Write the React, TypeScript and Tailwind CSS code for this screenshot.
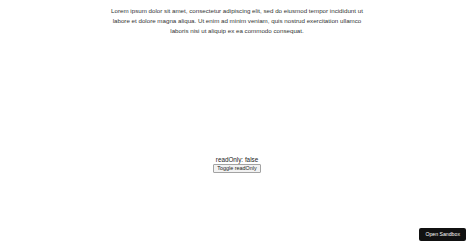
import React, { useState } from "react";

export default function App() {
  const [readOnly, setReadOnly] = useState(false);
  return (
    <div className="relative h-[248px] w-[474px] overflow-hidden bg-white text-[#333]" style={{ fontFamily: '"Liberation Sans", Arial, sans-serif' }}>
      <p className="mx-auto mt-[6px] w-[252px] text-center text-[6.2px] leading-[10px]">
        Lorem ipsum dolor sit amet, consectetur adipiscing elit, sed do eiusmod tempor incididunt ut labore et dolore magna aliqua. Ut enim ad minim veniam, quis nostrud exercitation ullamco laboris nisi ut aliquip ex ea commodo consequat.
      </p>
      <div className="mt-[120px] flex flex-col items-center">
        <div className="text-[6.3px] leading-[8px] text-[#222]">readOnly: {readOnly ? "true" : "false"}</div>
        <button
          onClick={() => setReadOnly(!readOnly)}
          className="rounded-[1px] border border-[#a3a3a3] bg-[#f2f2f2] px-[3px] text-[5.4px] leading-[7px] text-[#222]"
        >
          Toggle readOnly
        </button>
      </div>
      <button className="absolute bottom-[7px] right-[8px] h-[13px] rounded-[2px] bg-[#111] px-[6px] text-[5.2px] leading-[13px] text-white">
        Open Sandbox
      </button>
    </div>
  );
}
